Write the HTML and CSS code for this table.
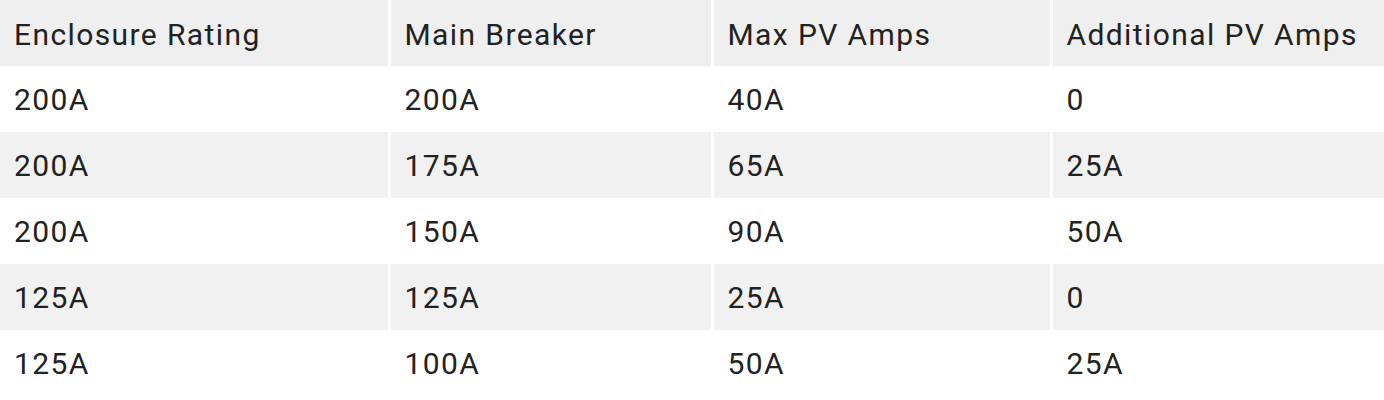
FILE: index.html
```html
<!DOCTYPE html>
<html lang="en">
<head>
<meta charset="utf-8">
<title>Enclosure Ratings</title>
<link rel="stylesheet" href="styles.css">
</head>
<body>
<table class="ratings">
  <colgroup>
    <col class="c1"><col class="c2"><col class="c3"><col class="c4">
  </colgroup>
  <thead>
    <tr><th>Enclosure Rating</th><th>Main Breaker</th><th>Max PV Amps</th><th>Additional PV Amps</th></tr>
  </thead>
  <tbody>
    <tr><td>200A</td><td>200A</td><td>40A</td><td>0</td></tr>
    <tr><td>200A</td><td>175A</td><td>65A</td><td>25A</td></tr>
    <tr><td>200A</td><td>150A</td><td>90A</td><td>50A</td></tr>
    <tr><td>125A</td><td>125A</td><td>25A</td><td>0</td></tr>
    <tr><td>125A</td><td>100A</td><td>50A</td><td>25A</td></tr>
  </tbody>
</table>
</body>
</html>
```
FILE: styles.css
```css
html, body {
  margin: 0;
  padding: 0;
  background: #ffffff;
}
.ratings {
  width: 1384px;
  table-layout: fixed;
  border-collapse: collapse;
  font-family: Roboto, "Liberation Sans", sans-serif;
  font-size: 30px;
  letter-spacing: 1.4px;
  color: #222222;
}
.c1 { width: 389px; }
.c2 { width: 323px; }
.c3 { width: 339px; }
.c4 { width: 333px; }
.ratings th,
.ratings td {
  height: 66px;
  padding: 0 0 0 14px;
  text-align: left;
  font-weight: 400;
  border-left: 3px solid #ffffff;
  box-sizing: border-box;
  white-space: nowrap;
}
.ratings th {
  padding-top: 3px;
}
.ratings th:first-child,
.ratings td:first-child {
  border-left: 0;
}
.ratings thead tr {
  background: #efefef;
}
.ratings tbody tr:nth-child(even) {
  background: #f1f1f1;
}
```
